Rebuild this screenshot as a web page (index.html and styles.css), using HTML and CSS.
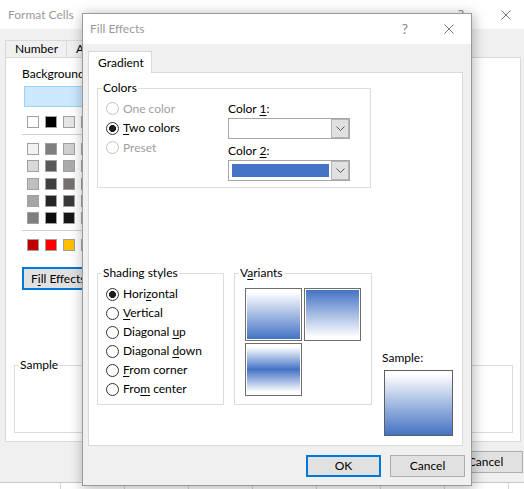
FILE: index.html
```html
<!DOCTYPE html>
<html lang="en">
<head>
<meta charset="utf-8">
<title>Fill Effects</title>
<link rel="stylesheet" href="styles.css">
</head>
<body>
<div class="fc">
  <div class="fc-title">
    <span class="title-text">Format Cells</span>
    <span class="qm fc-qm">?</span>
    <svg class="xicon" viewBox="0 0 10 10"><path d="M0.5 0.5L9.5 9.5M9.5 0.5L0.5 9.5"/></svg>
  </div>
  <div class="fc-tabs">
    <div class="fc-tab">Number</div>
    <div class="fc-tab">Alignment</div>
    <div class="fc-tab">Font</div>
    <div class="fc-tab">Border</div>
    <div class="fc-tab">Fill</div>
  </div>
  <div class="fc-panel">
    <div class="lbl">Background <u>C</u>olor:</div>
    <div class="nocolor"></div>
    <div class="swrow first">
      <span class="sw" style="background:#ffffff"></span><span class="sw" style="background:#000000"></span><span class="sw" style="background:#e7e6e6"></span><span class="sw" style="background:#44546a"></span><span class="sw" style="background:#4472c4"></span><span class="sw" style="background:#ed7d31"></span><span class="sw" style="background:#a5a5a5"></span><span class="sw" style="background:#ffc000"></span><span class="sw" style="background:#5b9bd5"></span><span class="sw" style="background:#70ad47"></span>
    </div>
    <div class="sep"></div>
    <div class="swgrid">
      <span class="sw" style="background:#f2f2f2"></span><span class="sw" style="background:#7f7f7f"></span><span class="sw" style="background:#d0cece"></span><span class="sw" style="background:#d6dce4"></span><span class="sw" style="background:#d9e2f3"></span><span class="sw" style="background:#fbe5d5"></span><span class="sw" style="background:#ededed"></span><span class="sw" style="background:#fff2cc"></span><span class="sw" style="background:#deebf6"></span><span class="sw" style="background:#e2efd9"></span>
      <span class="sw" style="background:#d9d9d9"></span><span class="sw" style="background:#595959"></span><span class="sw" style="background:#aeabab"></span><span class="sw" style="background:#adb9ca"></span><span class="sw" style="background:#b4c6e7"></span><span class="sw" style="background:#f7cbac"></span><span class="sw" style="background:#dbdbdb"></span><span class="sw" style="background:#fee599"></span><span class="sw" style="background:#bdd7ee"></span><span class="sw" style="background:#c5e0b3"></span>
      <span class="sw" style="background:#bfbfbf"></span><span class="sw" style="background:#3f3f3f"></span><span class="sw" style="background:#757070"></span><span class="sw" style="background:#8496b0"></span><span class="sw" style="background:#8eaadb"></span><span class="sw" style="background:#f4b183"></span><span class="sw" style="background:#c9c9c9"></span><span class="sw" style="background:#ffd965"></span><span class="sw" style="background:#9dc3e6"></span><span class="sw" style="background:#a8d08d"></span>
      <span class="sw" style="background:#a5a5a5"></span><span class="sw" style="background:#262626"></span><span class="sw" style="background:#3a3838"></span><span class="sw" style="background:#323f4f"></span><span class="sw" style="background:#2f5496"></span><span class="sw" style="background:#c55a11"></span><span class="sw" style="background:#7b7b7b"></span><span class="sw" style="background:#bf9000"></span><span class="sw" style="background:#2e75b5"></span><span class="sw" style="background:#538135"></span>
      <span class="sw" style="background:#7f7f7f"></span><span class="sw" style="background:#0c0c0c"></span><span class="sw" style="background:#171616"></span><span class="sw" style="background:#222a35"></span><span class="sw" style="background:#1f3864"></span><span class="sw" style="background:#833c0b"></span><span class="sw" style="background:#525252"></span><span class="sw" style="background:#7f6000"></span><span class="sw" style="background:#1e4e79"></span><span class="sw" style="background:#375623"></span>
    </div>
    <div class="sep"></div>
    <div class="swrow std">
      <span class="sw" style="background:#c00000"></span><span class="sw" style="background:#ff0000"></span><span class="sw" style="background:#ffc000"></span><span class="sw" style="background:#ffff00"></span><span class="sw" style="background:#92d050"></span><span class="sw" style="background:#00b050"></span><span class="sw" style="background:#00b0f0"></span><span class="sw" style="background:#0070c0"></span><span class="sw" style="background:#002060"></span><span class="sw" style="background:#7030a0"></span>
    </div>
    <div class="fillbtn">F<u>i</u>ll Effects...</div>
    <div class="group fc-sample">
      <div class="legend">Sample</div>
    </div>
  </div>
  <div class="fc-buttons">
    <div class="btn">OK</div>
    <div class="btn">Cancel</div>
  </div>
</div>
<div class="sheet">
  <span class="cell first"></span><span class="cell"></span><span class="cell"></span><span class="cell"></span><span class="cell"></span><span class="cell"></span><span class="cell"></span><span class="cell"></span>
</div>

<div class="fe">
  <div class="fe-title">
    <span class="title-text">Fill Effects</span>
    <span class="qm fe-qm">?</span>
    <svg class="xicon" viewBox="0 0 10 10"><path d="M0.5 0.5L9.5 9.5M9.5 0.5L0.5 9.5"/></svg>
  </div>
  <div class="fe-body">
    <div class="fe-tab">Gradient</div>
    <div class="fe-panel">
      <div class="group colors">
        <div class="legend">Colors</div>
        <div class="colors-body">
          <div class="radiocol">
            <div class="radio-row dis-text"><span class="radio dis"></span>One color</div>
            <div class="radio-row"><span class="radio on"></span><span><u>T</u>wo colors</span></div>
            <div class="radio-row dis-text"><span class="radio dis"></span>Preset</div>
          </div>
          <div class="combocol">
            <div class="combo-label">Color <u>1</u>:</div>
            <div class="combo">
              <div class="combo-field"></div>
              <div class="combo-btn"><svg class="chev" viewBox="0 0 9 5"><polyline points="0.5,0.5 4.5,4.5 8.5,0.5"/></svg></div>
            </div>
            <div class="combo-label second">Color <u>2</u>:</div>
            <div class="combo">
              <div class="combo-field"><div class="blue-bar"></div></div>
              <div class="combo-btn"><svg class="chev" viewBox="0 0 9 5"><polyline points="0.5,0.5 4.5,4.5 8.5,0.5"/></svg></div>
            </div>
          </div>
        </div>
      </div>
      <div class="fe-row">
        <div class="group shading">
          <div class="legend">Shading styles</div>
          <div class="shading-body">
            <div class="radio-row small"><span class="radio on"></span><span>Hori<u>z</u>ontal</span></div>
            <div class="radio-row small"><span class="radio"></span><span><u>V</u>ertical</span></div>
            <div class="radio-row small"><span class="radio"></span><span>Diagonal <u>u</u>p</span></div>
            <div class="radio-row small"><span class="radio"></span><span>Diagonal <u>d</u>own</span></div>
            <div class="radio-row small"><span class="radio"></span><span><u>F</u>rom corner</span></div>
            <div class="radio-row small"><span class="radio"></span><span>Fro<u>m</u> center</span></div>
          </div>
        </div>
        <div class="group variants">
          <div class="legend">V<u>a</u>riants</div>
          <div class="vgrid">
            <div class="vbox"><div class="g g-down"></div></div>
            <div class="vbox"><div class="g g-up"></div></div>
            <div class="vbox"><div class="g g-mid"></div></div>
          </div>
        </div>
        <div class="sample-col">
          <div class="sample-label">Sample:</div>
          <div class="sample-box"></div>
        </div>
      </div>
    </div>
    <div class="fe-buttons">
      <div class="btn focus">OK</div>
      <div class="btn">Cancel</div>
    </div>
  </div>
</div>
</body>
</html>
```
FILE: styles.css
```css
* { box-sizing: border-box; }
html, body { margin: 0; width: 524px; height: 489px; overflow: hidden; }
body {
  position: relative;
  background: #fff;
  font-family: "Lato", "Noto Sans", sans-serif;
  font-size: 12px;
  line-height: 16px;
  color: #000;
}
u { text-decoration: underline; text-underline-offset: 2px; }

/* ---------- background Format Cells window ---------- */
.fc {
  width: 524px;
  height: 482px;
  overflow: hidden;
  background: #f0f0f0;
  display: flex;
  flex-direction: column;
}
.fc-title {
  height: 29px;
  flex: none;
  background: #fff;
  display: flex;
  align-items: center;
  padding: 0 13px 0 8px;
}
.title-text { color: #999; white-space: nowrap; }
.qm {
  margin-left: auto;
  width: 8px;
  text-align: center;
  color: #888;
  font-size: 14px;
}
.fc-qm { margin-right: 36px; }
.xicon { width: 10px; height: 10px; flex: none; }
.xicon path { stroke: #777; stroke-width: 1; fill: none; }

.fc-tabs {
  height: 28px;
  flex: none;
  display: flex;
  align-items: flex-end;
  padding-left: 5px;
  overflow: hidden;
}
.fc-tab {
  height: 17px;
  flex: none;
  padding: 0 8px 0 9px;
  border: 1px solid #d9d9d9;
  border-bottom: none;
  margin-right: -1px;
  line-height: 16px;
  white-space: nowrap;
}
.fc-panel {
  flex: none;
  margin: 0 3px 0 5px;
  height: 385px;
  background: #fff;
  border: 1px solid #d9d9d9;
  padding: 8px 0 0 16px;
}
.lbl { white-space: nowrap; }
.nocolor {
  margin: 4px 0 0 2px;
  width: 190px;
  height: 21px;
  background: #cce8ff;
  border: 1px solid #99d1ff;
}
.swrow { display: flex; gap: 6px; margin-left: 5px; }
.swrow.first { margin-top: 9px; }
.swrow.std { margin-top: 8px; }
.sw {
  width: 12px;
  height: 12px;
  flex: none;
  border: 1px solid #a0a0a0;
}
.sep { height: 1px; width: 184px; background: #d0d0d0; margin-top: 6px; }
.swgrid {
  margin: 8px 0 0 5px;
  display: grid;
  grid-template-columns: repeat(10, 12px);
  grid-auto-rows: 12px;
  column-gap: 6px;
  row-gap: 5.3px;
}
.fillbtn {
  margin-top: 16px;
  width: 110px;
  height: 23px;
  border: 2px solid #0078d7;
  background: #e1e1e1;
  padding-left: 7px;
  line-height: 19px;
  white-space: nowrap;
}
.fc-sample {
  margin: 75px 0 0 -8px;
  width: 499px;
  height: 68px;
}
.fc-buttons {
  display: flex;
  justify-content: flex-end;
  gap: 9px;
  margin-top: 9px;
  padding-right: 1px;
}
.btn {
  width: 75px;
  height: 22px;
  flex: none;
  border: 1px solid #adadad;
  background: #e1e1e1;
  text-align: center;
  line-height: 20px;
}
.btn.focus { border: 2px solid #0078d7; line-height: 18px; }

.sheet {
  height: 7px;
  border-top: 1px solid #c6c6c6;
  display: flex;
  overflow: hidden;
  background: #fff;
}
.cell { flex: none; width: 64px; height: 100%; border-right: 1px solid #d4d4d4; }
.cell.first { width: 61px; }

/* ---------- Fill Effects dialog (window over the other) ---------- */
.fe {
  position: absolute;
  left: 82px;
  top: 13px;
  width: 390px;
  height: 473px;
  background: #f0f0f0;
  border: 1px solid #9a9a9a;
  box-shadow: 1px 2px 12px 1px rgba(0, 0, 0, 0.28);
  display: flex;
  flex-direction: column;
}
.fe-title {
  height: 30px;
  flex: none;
  background: #fff;
  display: flex;
  align-items: center;
  padding: 0 17px 0 7px;
}
.fe-qm { margin-right: 35px; }
.fe-body { flex: 1; padding: 7px 8px 0 5px; }
.fe-tab {
  position: relative;
  z-index: 1;
  width: 64px;
  height: 22px;
  margin-bottom: -1px;
  background: #fff;
  border: 1px solid #d9d9d9;
  border-bottom: none;
  padding-left: 9px;
  line-height: 21px;
}
.fe-panel {
  width: 375px;
  height: 374px;
  background: #fff;
  border: 1px solid #d9d9d9;
}

.group { border: 1px solid #dcdcdc; background: #fff; }
.legend {
  position: relative;
  width: fit-content;
  background: #fff;
  padding: 0 1px;
  margin: -9px 0 -7px 4px;
  line-height: 16px;
  white-space: nowrap;
}
.colors { margin: 15px 0 0 8px; width: 274px; height: 100px; }
.colors-body { display: flex; }
.radiocol { width: 130px; flex: none; padding: 10px 0 0 7.5px; }
.radio-row {
  display: flex;
  align-items: center;
  gap: 4.5px;
  height: 19.5px;
  white-space: nowrap;
}
.radio-row.small { height: 19px; }
.radio {
  width: 13px;
  height: 13px;
  flex: none;
  border-radius: 50%;
  border: 1px solid #333;
  background: #fff;
}
.radio.on { background: radial-gradient(circle, #1e1e1e 0 3.2px, #fff 3.8px); }
.radio.dis { border-color: #c0c0c0; }
.dis-text { color: #a0a0a0; }

.combocol { padding-top: 12px; }
.combo-label { white-space: nowrap; }
.combo-label.second { margin-top: 4px; }
.combo {
  margin-top: 1px;
  width: 122px;
  height: 21px;
  border: 1px solid #a6a6a6;
  background: #fff;
  display: flex;
}
.combo-field { flex: 1; }
.combo-btn {
  width: 18px;
  flex: none;
  background: #e1e1e1;
  box-shadow: inset 0 0 0 1px #b4b4b4;
  display: flex;
  align-items: center;
  justify-content: center;
}
.chev { width: 9px; height: 5px; }
.chev polyline { fill: none; stroke: #555; stroke-width: 1; }
.blue-bar { margin: 3px 0 0 3px; width: 97px; height: 13px; background: #4472c4; }

.fe-row { display: flex; align-items: flex-start; margin: 85px 0 0 8px; }
.shading { width: 127px; height: 132px; flex: none; }
.shading-body { padding: 10.5px 0 0 7.5px; }
.variants { width: 138px; height: 132px; flex: none; margin-left: 10px; }
.vgrid {
  display: grid;
  grid-template-columns: 57px 57px;
  grid-auto-rows: 53px;
  column-gap: 1.5px;
  row-gap: 2px;
  padding: 14px 0 0 10px;
}
.vbox { border: 1px solid #6e6e6e; padding: 1px; background: #fff; }
.g { height: 100%; }
.g-down { background: linear-gradient(#ffffff 4%, #4472c4); }
.g-up { background: linear-gradient(#4472c4, #ffffff 96%); }
.g-mid { background: linear-gradient(#ffffff 4%, #4472c4 50%, #ffffff 96%); }
.sample-col { margin: 77px 0 0 10px; }
.sample-label { white-space: nowrap; }
.sample-box {
  margin: 4px 0 0 2px;
  width: 69px;
  height: 66px;
  border: 1px solid #5f5f5f;
  background: linear-gradient(#ffffff 5%, #4472c4);
}
.fe-buttons {
  display: flex;
  justify-content: flex-end;
  gap: 9px;
  margin: 9px -2px 0 0;
}
```
